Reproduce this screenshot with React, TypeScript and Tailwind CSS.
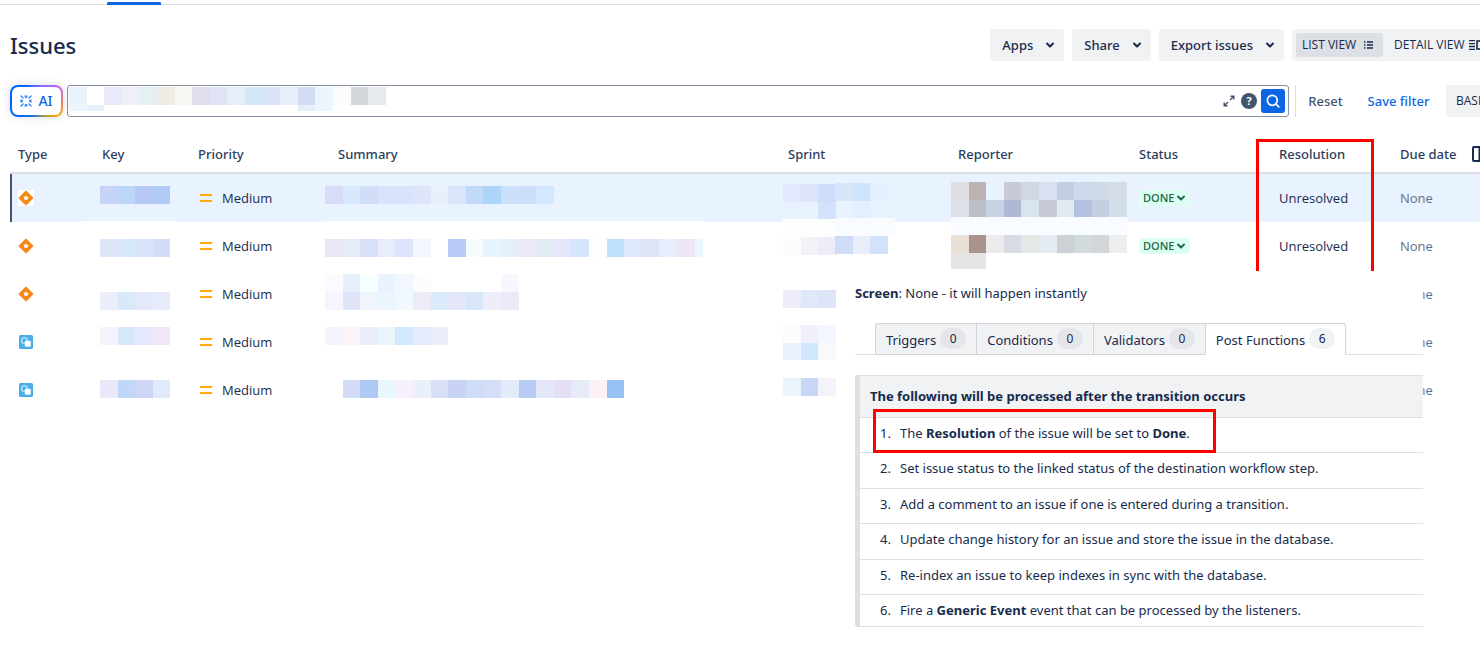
import { useState } from 'react';

type Run = { x?: number; y: number; w?: number; h?: number; colors: string };

type Issue = {
  type: 'change' | 'subtask';
  key: Run[];
  summary: Run[];
  sprint: Run[];
  reporter?: Run[];
  status?: string;
  resolution?: string;
};

// width of one pixelated block
const STEP = 17.6;

const queryPixels: Run[] = [
  { y: 0, colors: 'e8f3fc ffffff e8eaf9 efeef9 e6eff1 f0ebe4 faf8f4 e2dcef dfe4f4 e6eef9 d2e8f9 dae4f6 e6edfb d2dcf2 ecf4fd fafcfc d2d7db e6e9ee' },
  { y: 18, h: 6, colors: 'ebf5fe e6effc - - - - - - - - - - - e6edfb eaf6fe' },
];

const issues: Issue[] = [
  {
    type: 'change',
    key: [
      { y: 12, colors: 'c5d4f7 bcd6fa b6c9f6 b1cbf8' },
      { x: -18, y: 47, w: 93, h: 1, colors: 'ffffff' },
    ],
    summary: [
      { y: 12, colors: 'd9dcf8 d8e9fd d1def9 d9e3fc d9e3fc dfe4f9 e9effd dce4fb c0daf8 add4f9 cbe0fb cddefa d2e8fe' },
      { y: 47, w: 378, h: 1, colors: 'ffffff' },
    ],
    sprint: [
      { y: 10, colors: 'e3e9fc dfe4f8 cedefb' },
      { x: 52, y: 9, colors: 'd5e6fb cce4fc e1effe' },
      { x: 35, y: 28, h: 17, colors: 'd2e2fd' },
      { x: 70, y: 27, colors: 'e5eefe' },
    ],
    reporter: [
      { y: 8, colors: 'dedfe1 bdb3b3 - c9cad9 d1d8e1 d9e0ef c2cfe2 ccd9ea cedbe7 d4dce8' },
      { y: 26, h: 17, colors: 'dde1ea bebfc5 c6d3e4 aebad3 d9e4ed c7cbd7 e1e9f1 b3c3df c3cfe1 d3dde9' },
    ],
    status: 'DONE',
    resolution: 'Unresolved',
  },
  {
    type: 'change',
    key: [{ y: 17, colors: 'e0e6f9 d8e9f9 d9e4fa d2def8' }],
    summary: [
      { y: 17, colors: 'ece7f8 e6edf7 d8e0f9 e9edfb dde5fb f2f7fe - b7caf5 f6fbff e6f4fe e3effb ece8f8 e1ecf5 e3e7f9 d5e6fc fcfdff c0dffa dde9fa dfe4f6 e9eefd ede5f8' },
      { x: 370, y: 17, w: 8, colors: 'eaf7fe' },
    ],
    sprint: [
      { y: -3, w: 52, colors: 'fdfefe' },
      { x: 52, y: -4, w: 60, colors: 'f9fcff' },
      { y: 15, colors: 'fcfcfc f4f1f8 eeecf9' },
      { x: 52, y: 14, colors: 'd0dbf7 e8edf9 d2e2fa' },
    ],
    reporter: [
      { y: -5, w: 177, colors: 'f8fbff' },
      { y: 13, colors: 'e8dfd7 a8948c eeebec d8dbe4 e5e9e5 e4ebf2 cdd0d5 d1dbdc d2d6d9 eeeded' },
      { y: 31, h: 16, colors: 'e6e4e6 e7e5e4' },
    ],
    status: 'DONE',
    resolution: 'Unresolved',
  },
  {
    type: 'change',
    key: [{ y: 22, colors: 'ebeefb d8e9f9 e4e8fb e8ebfa' }],
    summary: [
      { y: 4, colors: 'fbfaff e6f1fc f7feff eaf2fd f0f7fe fcfcff - - - - f9f7fd' },
      { y: 22, colors: 'f6f4fe e0e5f8 eff4fd ebf5fe f1f9fe ececf6 d9eafb e3e7f7 d8e6f9 eeeefa ede9f8' },
    ],
    sprint: [{ y: 20, colors: 'efebf8 dee8fa dde4f8' }],
  },
  {
    type: 'subtask',
    key: [{ y: 9, colors: 'f3f3fc d6e7f9 e6e9fb efe6f7' }],
    summary: [{ y: 9, colors: 'f5f3fd fcf5fc e8edf9 eaf4fc d2e8fd e4ebfb eaeefb' }],
    sprint: [
      { y: 7, colors: 'fcfcfd f2effc f3f6fe' },
      { y: 25, h: 17, colors: 'ebf2fd d2e7fb f9f8fd' },
    ],
  },
  {
    type: 'subtask',
    key: [{ y: 14, colors: 'e9e8f8 c1d7f7 ced5f5 e1eafa' }],
    summary: [
      { y: 14, colors: '- d3daf5 afc9f5 e8f6fd f7effb eaf0fa dadff8 c7d2f5 cdddf7 d4dff7 e3eafa b7cbf5 e3e7f9 e3e0f5 e5ecf7 fcf1f6 97c2f4' },
    ],
    sprint: [{ y: 12, colors: 'ebf3fb c8d6f7 f4f2fb' }],
  },
];

const tabs = [
  { name: 'Triggers', count: 0 },
  { name: 'Conditions', count: 0 },
  { name: 'Validators', count: 0 },
  { name: 'Post Functions', count: 6 },
];

const postFunctions = [
  <>The <b>Resolution</b> of the issue will be set to <b>Done</b>.</>,
  <>Set issue status to the linked status of the destination workflow step.</>,
  <>Add a comment to an issue if one is entered during a transition.</>,
  <>Update change history for an issue and store the issue in the database.</>,
  <>Re-index an issue to keep indexes in sync with the database.</>,
  <>Fire a <b>Generic Event</b> event that can be processed by the listeners.</>,
];

// Pixelated blocks that hide the private values
const Pixels = ({ runs, className }: { runs: Run[]; className: string }) => (
  <svg className={`absolute top-0 overflow-visible pointer-events-none ${className}`} width="1" height="1" shapeRendering="crispEdges" aria-hidden="true">
    {runs.map((run, r) =>
      run.colors.split(' ').map((color, i) => {
        if (color === '-') return null;
        const left = Math.round(i * STEP);
        const width = run.w ?? Math.round((i + 1) * STEP) - left;
        return <rect key={`${r}-${i}`} x={(run.x ?? 0) + left} y={run.y} width={width} height={run.h ?? 18} fill={`#${color}`} />;
      })
    )}
  </svg>
);

const Chevron = ({ className }: { className: string }) => (
  <svg className={className} viewBox="7 7 10 10" fill="currentColor" aria-hidden="true">
    <path d="M8.292 9.793a1.009 1.009 0 000 1.419l2.939 2.965c.218.215.5.322.779.322s.556-.107.769-.322l2.93-2.955a1.01 1.01 0 000-1.419.987.987 0 00-1.406 0l-2.298 2.317-2.307-2.327a.99.99 0 00-1.406 0z" />
  </svg>
);

const MenuButton = ({ label }: { label: string }) => (
  <button type="button" className="flex h-8 items-center gap-3 rounded-[3px] bg-[#f1f2f4] pr-[9px] pl-3 font-['Noto_Sans',sans-serif] font-medium text-[#172b4d]">
    {label}
    <Chevron className="size-2.5" />
  </button>
);

const TypeIcon = ({ type }: { type: Issue['type'] }) =>
  type === 'change' ? (
    <svg className="block size-4 bg-white" viewBox="0 0 16 16" role="img" aria-label="Change">
      <path d="M8 .8 15.2 8 8 15.2.8 8z" fill="#f68a16" stroke="#f68a16" strokeWidth="1" strokeLinejoin="round" />
      <circle cx="8" cy="8" r="2.1" fill="#fff" />
    </svg>
  ) : (
    <svg className="block size-4" viewBox="0 0 16 16" role="img" aria-label="Sub-task">
      <rect x="1" y="1" width="14" height="14" rx="1.6" fill="#4bade8" />
      <rect x="3.8" y="3.8" width="5.4" height="5.4" rx="1.6" fill="none" stroke="#c5e4f8" strokeWidth="1.3" />
      <rect x="6.8" y="6.8" width="6" height="6" rx="1" fill="#fff" />
    </svg>
  );

const IssuesPage: React.FC = () => {
  const [query, setQuery] = useState('');
  const [activeTab, setActiveTab] = useState('Post Functions');

  return (
    <div className="relative min-h-screen overflow-hidden bg-white font-['Open_Sans',sans-serif] text-[13px] leading-5 whitespace-nowrap text-[#172b4d]">
      <div className="flex h-[5px] items-end border-b border-[#dcdfe4] pl-[107px]">
        <div className="-mb-px h-[3px] w-[54px] rounded-t-[1px] bg-[#0c66e4]" />
      </div>

      <header className="mt-6 flex items-center pl-2.5">
        <h1 className="flex-1 font-['Noto_Sans',sans-serif] text-[22px] leading-8 font-medium">Issues</h1>
        <div className="flex gap-2">
          <MenuButton label="Apps" />
          <MenuButton label="Share" />
          <MenuButton label="Export issues" />
          <div className="flex h-8 w-[188px] items-center gap-[5px] overflow-hidden rounded-l-[3px] bg-[#f1f2f4] pl-1 text-xs font-medium">
            <button type="button" className="flex h-6 w-[87px] shrink-0 items-center justify-between rounded-[3px] bg-[#dcdfe4] pr-2.5 pl-1.5">
              LIST VIEW
              <svg className="h-2 w-[9px]" viewBox="0 0 9 8" stroke="#172b4d" strokeWidth="1.4" aria-hidden="true">
                <path d="M0 1h1.5M0 4h1.5M0 7h1.5M3 1h6M3 4h6M3 7h6" />
              </svg>
            </button>
            <button type="button" className="flex h-6 shrink-0 items-center gap-1 pl-1.5">
              DETAIL VIEW
              <svg className="h-2.5 w-4" viewBox="0 0 16 10" fill="none" stroke="#172b4d" aria-hidden="true">
                <path d="M0 .7h6M0 3.6h6M0 6.5h6M0 9.3h6" strokeWidth="1.3" />
                <rect x="8" y="1" width="7" height="8" strokeWidth="1.6" />
              </svg>
            </button>
          </div>
        </div>
      </header>

      <div className="mt-6 flex h-8 items-center pl-2.5">
        <button
          type="button"
          className="h-8 w-[53px] rounded-lg bg-[conic-gradient(#6a6cf8,#bf63f3_55deg,#ffa900_125deg,#a59a50_150deg,#1870e0_200deg,#0065ff_230deg,#0065ff_320deg,#6a6cf8)] p-0.5 shadow-[0_0_8px_rgba(9,30,66,0.16)]"
        >
          <span className="flex h-full items-center justify-center gap-1.5 rounded-md bg-white font-['Noto_Sans',sans-serif] text-sm font-medium text-[#0c66e4]">
            <svg className="size-3" viewBox="0 0 12 12" stroke="#1d7afc" strokeWidth="1.2" strokeLinecap="round" aria-hidden="true">
              <path d="M1 1l2.2 2.2M11 1 8.8 3.2M1 11l2.2-2.2M11 11 8.8 8.8M5.1.8l.3 1.6M6.9.8l-.3 1.6M5.1 11.2l.3-1.6M6.9 11.2l-.3-1.6M.8 5.1l1.6.3M.8 6.9l1.6-.3M11.2 5.1l-1.6.3M11.2 6.9l-1.6-.3" />
            </svg>
            AI
          </span>
        </button>

        <div className="relative ml-1 flex h-8 flex-1 items-center rounded-[3px] border border-[#8590a2] pr-[3px]">
          <input
            type="text"
            aria-label="JQL query"
            value={query}
            onChange={(e) => setQuery(e.target.value)}
            className="h-full min-w-0 flex-1 px-2 outline-none"
          />
          <Pixels runs={queryPixels} className="left-px mt-px" />
          <button type="button" aria-label="Expand editor">
            <svg className="size-3" viewBox="0 0 12 12" fill="none" stroke="#44546f" strokeWidth="1.4" aria-hidden="true">
              <path d="M7.5 1.2h3.3v3.3M10.8 1.2 7 5M4.5 10.8H1.2V7.5M1.2 10.8 5 7" />
            </svg>
          </button>
          <button type="button" aria-label="Syntax help" className="ml-1.5 flex size-4 items-center justify-center rounded-full bg-[#44546f] text-[11px] leading-4 font-bold text-white">
            ?
          </button>
          <button type="button" aria-label="Search" className="ml-1 flex size-6 items-center justify-center rounded-[3px] bg-[#0c66e4]">
            <svg className="size-3.5" viewBox="0 0 14 14" fill="none" stroke="#fff" strokeWidth="1.7" strokeLinecap="round" aria-hidden="true">
              <circle cx="6.3" cy="6.3" r="5" />
              <path d="m10 10 2.8 2.8" />
            </svg>
          </button>
        </div>

        <div className="ml-1.5 h-8 w-px bg-[#dcdfe4]" />
        <button type="button" className="ml-3 w-[35px] font-['Noto_Sans',sans-serif] font-medium text-[#44546f]">Reset</button>
        <button type="button" className="ml-6 w-[63px] font-['Noto_Sans',sans-serif] font-medium text-[#0c66e4]">Save filter</button>
        <div className="ml-4 h-8 w-[34px] overflow-hidden rounded-l-[3px] bg-[#f1f2f4]">
          <button type="button" className="h-8 pl-2.5 text-xs font-medium">BASIC</button>
        </div>
      </div>

      <div className="mt-5 pl-2.5">
        <table className="w-full table-fixed border-separate border-spacing-0 text-left">
          <thead className="font-['Noto_Sans',sans-serif]">
            <tr className="h-[37px] text-[#2c3e5d] *:border-b-2 *:border-[#dcdfe4] *:p-0 *:pb-0.5 *:pl-2 *:font-medium">
              <th className="w-[84px]">Type</th>
              <th className="w-24">Key</th>
              <th className="w-[140px]">Priority</th>
              <th>Summary</th>
              <th className="w-[170px]">Sprint</th>
              <th className="w-[181px]">Reporter</th>
              <th className="w-[140px]">Status</th>
              <th className="relative w-[121px]">
                Resolution
                <span className="pointer-events-none absolute top-0.5 -left-[15px] h-[140px] w-[118px] border-3 border-[#ff0000]" />
              </th>
              <th className="w-[88px]">
                <div className="flex items-center gap-4">
                  Due date
                  <button type="button" aria-label="Configure columns">
                    <svg className="block h-4 w-[18px]" viewBox="0 0 18 16" fill="none" stroke="#172b4d" strokeWidth="2" aria-hidden="true">
                      <rect x="1" y="1" width="16" height="14" rx="1" />
                      <path d="M7.5 1v14M12.5 1v14" />
                    </svg>
                  </button>
                </div>
              </th>
            </tr>
          </thead>
          <tbody>
            {issues.map((issue, index) => (
              <tr key={index} className="h-12 *:p-0 *:pl-2 first:bg-[#e9f2ff] first:shadow-[inset_2px_0_0_#44546f]">
                <td><TypeIcon type={issue.type} /></td>
                <td className="relative"><Pixels runs={issue.key} className="left-1.5" /></td>
                <td>
                  <div className="flex items-center gap-2.5 pl-0.5">
                    <span className="h-2 w-3 border-y-2 border-[#ffab00]" />
                    Medium
                  </div>
                </td>
                <td className="relative"><Pixels runs={issue.summary} className="-left-[5px]" /></td>
                <td className="relative"><Pixels runs={issue.sprint} className="left-[3px]" /></td>
                <td className="relative"><Pixels runs={issue.reporter ?? []} className="left-px" /></td>
                <td>
                  {issue.status && (
                    <button type="button" className="flex h-4 w-[51px] items-center justify-between rounded-[3px] bg-[#dcfff1] pr-1 pl-1 text-[11px] leading-4 font-semibold text-[#216e4e]">
                      {issue.status}
                      <Chevron className="size-2.5" />
                    </button>
                  )}
                </td>
                <td>{issue.resolution}</td>
                <td className="text-[#626f86]">None</td>
              </tr>
            ))}
          </tbody>
        </table>
      </div>

      {/* Transition details, laid over the list */}
      <section className="absolute top-[271px] right-[57px] w-[583px] bg-white pt-3 pb-6 pl-[15px] font-['Noto_Sans',sans-serif]">
        <p><b>Screen</b>: None - it will happen instantly</p>

        <div role="tablist" className="mt-5 flex h-8 border-b border-[#dcdfe4] pl-5">
          {tabs.map((tab) => (
            <button
              key={tab.name}
              type="button"
              role="tab"
              aria-selected={activeTab === tab.name}
              onClick={() => setActiveTab(tab.name)}
              className={`-mb-px flex items-center gap-1 border border-r-0 border-[#d0d4db] px-2.5 pt-0.5 first:rounded-tl-[3px] last:rounded-tr-[3px] last:border-r ${
                activeTab === tab.name ? 'border-b-white bg-white' : 'bg-[#f1f2f4]'
              }`}
            >
              {tab.name}
              <span className={`mb-[3px] h-[21px] w-[26px] rounded-full text-xs leading-[22px] ${activeTab === tab.name ? 'bg-[#f1f2f4]' : 'bg-[#e4e6ea]'}`}>
                {tab.count}
              </span>
            </button>
          ))}
        </div>

        <div className="mt-5 rounded-l-[3px] border-y border-l-5 border-[#dcdfe4]">
          <h2 className="h-[41px] bg-[#f1f2f4] pl-2.5 leading-[41px] font-bold">The following will be processed after the transition occurs</h2>
          <div className="relative">
            <ol>
              {postFunctions.map((text, index) => (
                <li key={index} className="flex border-t border-[#dcdfe4] pt-[5px] pl-5 odd:h-[35px] even:h-9 last:h-8!">
                  <span className="w-5">{index + 1}.</span>
                  <span>{text}</span>
                </li>
              ))}
            </ol>
            <div className="pointer-events-none absolute -top-2 left-[13px] h-11 w-[343px] border-3 border-[#ff0000]" />
          </div>
        </div>
      </section>
    </div>
  );
};

export default IssuesPage;
